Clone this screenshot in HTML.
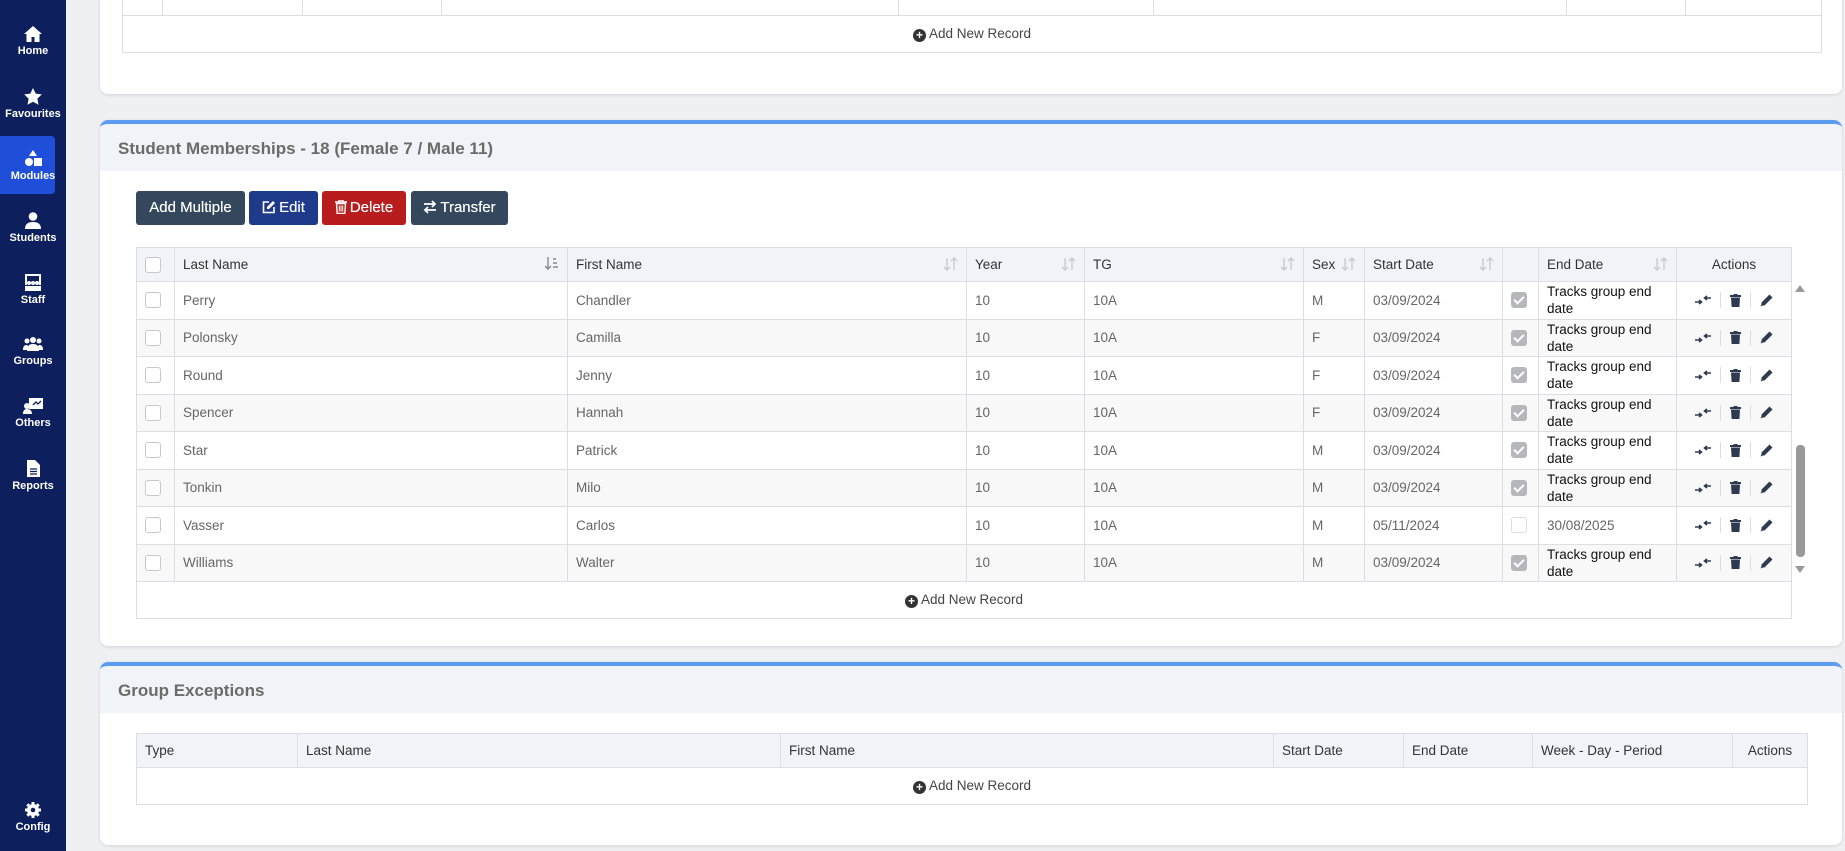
<!DOCTYPE html>
<html><head><meta charset="utf-8"><style>
*{box-sizing:border-box;margin:0;padding:0}
body{width:1845px;height:851px;overflow:hidden;background:#eef0f4;font-family:"Liberation Sans",sans-serif;position:relative}
.sb{position:absolute;left:0;top:0;width:66px;height:851px;background:#0d1f5c}
.si{position:absolute;left:0;width:66px;text-align:center;color:#fff;font-size:11px;font-weight:bold}
.si svg{display:block;margin:0 auto 3px}
.act{position:absolute;left:0;top:136px;width:55px;height:58px;background:#1f4fd8;border-radius:0 4px 4px 0}
.card{position:absolute;left:100px;width:1742px;background:#fff;border-radius:8px;box-shadow:0 1px 3px rgba(0,0,0,.12)}
.hd{height:51px;background:#f0f3f8;border-top:4px solid #5b9bf0;border-radius:8px 8px 0 0;padding:15px 18px;font-size:17px;font-weight:bold;color:#6b6b6b}
table{border-collapse:collapse;table-layout:fixed;position:absolute}
td,th{border:1px solid #dcdee2;font-size:13.5px;color:#666;text-align:left;padding:0 8px;white-space:nowrap;overflow:hidden}
th{background:#f0f3f8;font-weight:normal;color:#333;height:34px;position:relative}
td{height:37.5px}
tr.alt td{background:#f8f8f8}
.cb{display:inline-block;width:16px;height:16px;border:1px solid #c8c8c8;border-radius:3px;background:#fff;vertical-align:middle}
.ck{display:inline-block;width:16px;height:16px;border-radius:3px;background:#b4b8bd;vertical-align:middle;position:relative}
.ck:after{content:"";position:absolute;left:5px;top:2px;width:4px;height:8px;border:solid #fff;border-width:0 2px 2px 0;transform:rotate(45deg)}
.so{position:absolute;right:8px;top:9px}
.end{color:#111;white-space:normal;line-height:17px;font-size:13.5px}
.ac{text-align:center;padding:0}
.ac svg{vertical-align:middle}
.sep{display:inline-block;width:1px;height:16px;background:#ddd;vertical-align:middle;margin:0 9px}
.add{text-align:center;color:#444;font-size:13.5px}
.pl{display:inline-block;width:13px;height:13px;border-radius:50%;background:#333;color:#fff;font-size:12px;line-height:13px;text-align:center;font-weight:bold;vertical-align:-1px;margin-right:3px}
.btn{position:absolute;top:191px;height:34px;color:#fff;font-size:15px;line-height:34px;text-align:center;border-radius:3px;text-shadow:0 0 .4px #fff}
.btn svg{vertical-align:-2px;margin-right:3px}
</style></head><body>
<div class="sb">
<div class="act"></div>
<div class="si" style="top:26px"><svg width="18" height="16" viewBox="0 0 18 16"><path d="M9 0L0 8h2.5v8h5v-5h3v5h5V8H18z" fill="#fff"/></svg>Home</div>
<div class="si" style="top:88px"><svg width="18" height="17" viewBox="0 0 18 17"><path d="M9 0l2.7 5.6 6.1.8-4.4 4.2 1.1 6.1L9 13.8 3.5 16.7l1.1-6.1L.2 6.4l6.1-.8z" fill="#fff"/></svg>Favourites</div>
<div class="si" style="top:150px"><svg width="18" height="17" viewBox="0 0 18 17"><path d="M9 0l4 6H5z" fill="#fff"/><circle cx="5" cy="12" r="4" fill="#fff"/><rect x="10" y="8" width="8" height="8" fill="#fff"/></svg>Modules</div>
<div class="si" style="top:212px"><svg width="16" height="17" viewBox="0 0 16 17"><circle cx="8" cy="4.5" r="4.3" fill="#fff"/><path d="M0 17c0-5 3-7 8-7s8 2 8 7z" fill="#fff"/></svg>Students</div>
<div class="si" style="top:274px"><svg width="18" height="17" viewBox="0 0 18 17"><path d="M1 0h16v11h-2V2H3v9H1z" fill="#fff"/><circle cx="5" cy="9" r="2" fill="#fff"/><circle cx="9" cy="9" r="2" fill="#fff"/><circle cx="13" cy="9" r="2" fill="#fff"/><rect x="1" y="12" width="16" height="5" fill="#fff"/></svg>Staff</div>
<div class="si" style="top:336px"><svg width="20" height="16" viewBox="0 0 20 16"><circle cx="10" cy="4" r="3" fill="#fff"/><circle cx="4" cy="5" r="2.5" fill="#fff"/><circle cx="16" cy="5" r="2.5" fill="#fff"/><path d="M4 15c0-5 2-7 6-7s6 2 6 7zM0 14c0-4 1.5-5 4-5l1 1-1 4zM20 14c0-4-1.5-5-4-5l-1 1 1 4z" fill="#fff"/></svg>Groups</div>
<div class="si" style="top:398px"><svg width="20" height="16" viewBox="0 0 20 16"><rect x="6" y="0" width="14" height="11" fill="#fff"/><path d="M10 7l3-3 2 2 3-3" stroke="#0d1f5c" stroke-width="1.3" fill="none"/><circle cx="4" cy="8" r="3" fill="#fff"/><path d="M0 16c0-4 2-5 4-5s5 1 5 5z" fill="#fff"/></svg>Others</div>
<div class="si" style="top:460px"><svg width="13" height="17" viewBox="0 0 13 17"><path d="M0 0h8l5 5v12H0z" fill="#fff"/><path d="M3 9h7M3 11.5h7M3 14h7" stroke="#0d1f5c" stroke-width="1.2"/></svg>Reports</div>
<div class="si" style="top:802px"><svg width="16" height="16" viewBox="0 0 16 16"><circle cx="8" cy="8" r="6" fill="#fff"/><path d="M8 0v16M0 8h16M2.3 2.3l11.4 11.4M13.7 2.3L2.3 13.7" stroke="#fff" stroke-width="3"/><circle cx="8" cy="8" r="2.3" fill="#0d1f5c"/></svg>Config</div>
</div>

<div class="card" style="top:-10px;height:104px">
<table style="left:22px;top:-13px;width:1700px">
<tr><td style="width:40px;height:25px"></td><td style="width:140px"></td><td style="width:139px"></td><td style="width:457px"></td><td style="width:255px"></td><td style="width:413px"></td><td style="width:119px"></td><td></td></tr>
<tr><td colspan="8" class="add" style="height:37px"><span class="pl">+</span>Add New Record</td></tr>
</table>
</div>

<div class="card" style="top:120px;height:526px">
<div class="hd">Student Memberships - 18 (Female 7 / Male 11)</div>
</div>
<div class="btn" style="left:136px;width:109px;background:#34475c">Add Multiple</div>
<div class="btn" style="left:249px;width:69px;background:#1f3a8a"><svg width="14" height="14" viewBox="0 0 14 14"><path d="M7 2H1.5v10.5H12V7" stroke="#fff" stroke-width="1.6" fill="none"/><path d="M11 1l2 2-6 6H5V7z" fill="#fff"/></svg>Edit</div>
<div class="btn" style="left:322px;width:84px;background:#b91c1c"><svg width="12" height="14" viewBox="0 0 12 14"><path d="M0 2h12M4 2V0h4v2" stroke="#fff" stroke-width="1.4" fill="none"/><path d="M1.5 3.5h9l-.7 10H2.2z" stroke="#fff" stroke-width="1.4" fill="none"/><path d="M4.3 5.5v6M6 5.5v6M7.7 5.5v6" stroke="#fff"/></svg>Delete</div>
<div class="btn" style="left:411px;width:97px;background:#34475c"><svg width="14" height="14" viewBox="0 0 14 14"><path d="M1 4h11M9 1l3 3-3 3M13 10H2M5 7l-3 3 3 3" stroke="#fff" stroke-width="1.8" fill="none"/></svg>Transfer</div>

<table style="left:136px;top:247px;width:1656px">
<tr><th style="width:38px"><span class="cb"></span></th><th style="width:393px">Last Name<svg class="so" width="14" height="14" viewBox="0 0 14 14"><path d="M3 0v12M0 9l3 3 3-3" stroke="#888" stroke-width="1.4" fill="none"/><path d="M8 2h3M8 6h4M8 10h5" stroke="#888" stroke-width="1.4"/></svg></th><th style="width:399px">First Name<svg class="so" width="14" height="14" viewBox="0 0 14 14"><path d="M3 1v12M0 10l3 3 3-3M10 13V1M7 4l3-3 3 3" stroke="#c8ccd0" stroke-width="1.4" fill="none"/></svg></th><th style="width:118px">Year<svg class="so" width="14" height="14" viewBox="0 0 14 14"><path d="M3 1v12M0 10l3 3 3-3M10 13V1M7 4l3-3 3 3" stroke="#c8ccd0" stroke-width="1.4" fill="none"/></svg></th><th style="width:219px">TG<svg class="so" width="14" height="14" viewBox="0 0 14 14"><path d="M3 1v12M0 10l3 3 3-3M10 13V1M7 4l3-3 3 3" stroke="#c8ccd0" stroke-width="1.4" fill="none"/></svg></th><th style="width:61px">Sex<svg class="so" width="14" height="14" viewBox="0 0 14 14"><path d="M3 1v12M0 10l3 3 3-3M10 13V1M7 4l3-3 3 3" stroke="#c8ccd0" stroke-width="1.4" fill="none"/></svg></th><th style="width:138px">Start Date<svg class="so" width="14" height="14" viewBox="0 0 14 14"><path d="M3 1v12M0 10l3 3 3-3M10 13V1M7 4l3-3 3 3" stroke="#c8ccd0" stroke-width="1.4" fill="none"/></svg></th><th style="width:36px"></th><th style="width:138px">End Date<svg class="so" width="14" height="14" viewBox="0 0 14 14"><path d="M3 1v12M0 10l3 3 3-3M10 13V1M7 4l3-3 3 3" stroke="#c8ccd0" stroke-width="1.4" fill="none"/></svg></th><th style="text-align:center">Actions</th></tr>
<tr><td><span class="cb"></span></td><td>Perry</td><td>Chandler</td><td>10</td><td>10A</td><td>M</td><td>03/09/2024</td><td><span class="ck"></span></td><td class="end">Tracks group end date</td><td class="ac">A</td></tr>
<tr class="alt"><td><span class="cb"></span></td><td>Polonsky</td><td>Camilla</td><td>10</td><td>10A</td><td>F</td><td>03/09/2024</td><td><span class="ck"></span></td><td class="end">Tracks group end date</td><td class="ac">A</td></tr>
<tr><td><span class="cb"></span></td><td>Round</td><td>Jenny</td><td>10</td><td>10A</td><td>F</td><td>03/09/2024</td><td><span class="ck"></span></td><td class="end">Tracks group end date</td><td class="ac">A</td></tr>
<tr class="alt"><td><span class="cb"></span></td><td>Spencer</td><td>Hannah</td><td>10</td><td>10A</td><td>F</td><td>03/09/2024</td><td><span class="ck"></span></td><td class="end">Tracks group end date</td><td class="ac">A</td></tr>
<tr><td><span class="cb"></span></td><td>Star</td><td>Patrick</td><td>10</td><td>10A</td><td>M</td><td>03/09/2024</td><td><span class="ck"></span></td><td class="end">Tracks group end date</td><td class="ac">A</td></tr>
<tr class="alt"><td><span class="cb"></span></td><td>Tonkin</td><td>Milo</td><td>10</td><td>10A</td><td>M</td><td>03/09/2024</td><td><span class="ck"></span></td><td class="end">Tracks group end date</td><td class="ac">A</td></tr>
<tr><td><span class="cb"></span></td><td>Vasser</td><td>Carlos</td><td>10</td><td>10A</td><td>M</td><td>05/11/2024</td><td><span class="cb" style="border-color:#ddd"></span></td><td>30/08/2025</td><td class="ac">A</td></tr>
<tr class="alt"><td><span class="cb"></span></td><td>Williams</td><td>Walter</td><td>10</td><td>10A</td><td>M</td><td>03/09/2024</td><td><span class="ck"></span></td><td class="end">Tracks group end date</td><td class="ac">A</td></tr>
<tr><td colspan="10" class="add" style="height:37px"><span class="pl">+</span>Add New Record</td></tr>
</table>
<div style="position:absolute;left:1795px;top:285px;width:0;height:0;border:5px solid transparent;border-bottom:7px solid #999;border-top:none"></div>
<div style="position:absolute;left:1796px;top:445px;width:9px;height:112px;background:#999;border-radius:4px"></div>
<div style="position:absolute;left:1795px;top:566px;width:0;height:0;border:5px solid transparent;border-top:7px solid #999;border-bottom:none"></div>

<div class="card" style="top:662px;height:183px">
<div class="hd">Group Exceptions</div>
</div>
<table style="left:136px;top:733px;width:1672px">
<tr><th style="width:161px">Type</th><th style="width:483px">Last Name</th><th style="width:493px">First Name</th><th style="width:130px">Start Date</th><th style="width:129px">End Date</th><th style="width:200px">Week - Day - Period</th><th style="text-align:center">Actions</th></tr>
<tr><td colspan="7" class="add" style="height:37px"><span class="pl">+</span>Add New Record</td></tr>
</table>
<script>
var ic='<svg width="16" height="10" viewBox="0 0 16 10"><path d="M0 7h6M4 5l2.5 2L4 9" stroke="#2d3a4f" stroke-width="1.6" fill="none"/><path d="M16 3h-6M12 1L9.5 3 12 5" stroke="#2d3a4f" stroke-width="1.6" fill="none"/></svg><span class="sep"></span><svg width="11" height="13" viewBox="0 0 11 13"><rect x="0" y="1" width="11" height="2" fill="#2d3a4f"/><rect x="3.5" y="0" width="4" height="2" fill="#2d3a4f"/><path d="M1 3.5h9l-.6 9.5H1.6z" fill="#2d3a4f"/></svg><span class="sep"></span><svg width="13" height="13" viewBox="0 0 13 13"><path d="M9.5 0.5l3 3-8 8H1.5v-3z" fill="#2d3a4f"/><path d="M0.5 12.5l1.2-3 1.8 1.8z" fill="#2d3a4f"/></svg>';
document.querySelectorAll('td.ac').forEach(function(t){t.innerHTML=ic;});
</script>
</body></html>
